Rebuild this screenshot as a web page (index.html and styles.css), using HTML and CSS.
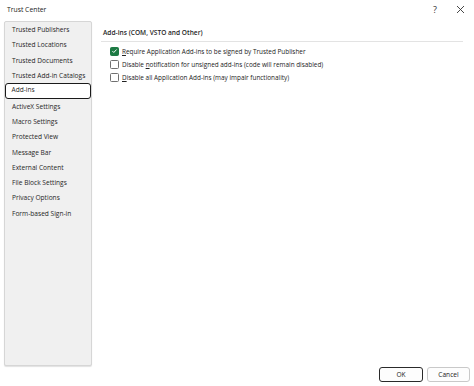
FILE: index.html
```html
<!DOCTYPE html>
<html>
<head>
<meta charset="utf-8">
<link rel="stylesheet" href="styles.css">
</head>
<body>
<div class="dialog">
  <div class="titlebar">
    <span class="title">Trust Center</span>
    <span class="help">?</span>
    <span class="close">
      <svg width="9" height="9" viewBox="0 0 9 9"><path d="M1 1L8 8M8 1L1 8" stroke="#333" stroke-width="0.9"/></svg>
    </span>
  </div>
  <div class="body">
    <nav class="sidebar">
      <div class="item">Trusted Publishers</div>
      <div class="item">Trusted Locations</div>
      <div class="item">Trusted Documents</div>
      <div class="item">Trusted Add-in Catalogs</div>
      <div class="item selected">Add-ins</div>
      <div class="item">ActiveX Settings</div>
      <div class="item">Macro Settings</div>
      <div class="item">Protected View</div>
      <div class="item">Message Bar</div>
      <div class="item">External Content</div>
      <div class="item">File Block Settings</div>
      <div class="item">Privacy Options</div>
      <div class="item">Form-based Sign-in</div>
    </nav>
    <main class="content">
      <div class="heading">Add-ins (COM, VSTO and Other)</div>
      <div class="options">
        <label class="opt"><span class="box checked"><svg width="8" height="8" viewBox="0 0 8 8"><path d="M1.6 4.1L3.2 5.7L6.4 2.3" fill="none" stroke="#fff" stroke-width="1.1"/></svg></span><span><u>R</u>equire Application Add-ins to be signed by Trusted Publisher</span></label>
        <label class="opt"><span class="box"></span><span>Disable <u>n</u>otification for unsigned add-ins (code will remain disabled)</span></label>
        <label class="opt"><span class="box"></span><span><u>D</u>isable all Application Add-ins (may impair functionality)</span></label>
      </div>
    </main>
  </div>
  <div class="footer">
    <button class="btn primary">OK</button>
    <button class="btn">Cancel</button>
  </div>
</div>
</body>
</html>
```
FILE: styles.css
```css
html, body {
  margin: 0;
  padding: 0;
  background: #ffffff;
}
body {
  font-family: "Open Sans", "Noto Sans", sans-serif;
  font-size: 6.6px;
  color: #1b1b1b;
}
.dialog {
  width: 474px;
  height: 386px;
  display: flex;
  flex-direction: column;
}
.titlebar {
  height: 19px;
  display: flex;
  align-items: center;
  padding: 0 9px 0 7px;
  box-sizing: border-box;
}
.title {
  flex: 1;
  font-size: 6.8px;
  color: #222;
}
.help {
  font-size: 9px;
  color: #333;
  margin-right: 19px;
}
.close {
  display: flex;
}
.body {
  height: 347px;
  display: flex;
  padding-top: 2px;
  box-sizing: border-box;
}
.sidebar {
  width: 88px;
  margin-left: 4px;
  background: #f0f0f0;
  border: 1px solid #d6d6d6;
  border-radius: 2px;
  box-shadow: 0 1px 1px rgba(0,0,0,0.12);
  box-sizing: border-box;
  display: flex;
  flex-direction: column;
}
.item {
  height: 15.3px;
  line-height: 15.3px;
  padding-left: 7px;
  color: #1f1f1f;
  white-space: nowrap;
}
.item.selected {
  background: #ffffff;
  border: 1.5px solid #1a1a1a;
  border-radius: 3px;
  padding-left: 5.5px;
  line-height: 12.3px;
  height: 15.5px;
  box-sizing: border-box;
}
.content {
  flex: 1;
  padding-left: 9px;
  padding-right: 11px;
}
.heading {
  font-weight: 600;
  color: #262626;
  padding-top: 7px;
  height: 13px;
  padding-left: 2px;
  border-bottom: 1px solid #e3e3e3;
}
.options {
  padding-left: 9px;
  padding-top: 2.5px;
  display: flex;
  flex-direction: column;
}
.opt {
  display: flex;
  align-items: center;
  height: 13px;
  font-size: 6.4px;
  color: #222;
  white-space: nowrap;
}
.opt u {
  text-decoration-thickness: 0.5px;
  text-underline-offset: 1px;
}
.box {
  width: 7px;
  height: 7px;
  border: 0.8px solid #707070;
  border-radius: 1.5px;
  background: #fff;
  margin-right: 3px;
  display: flex;
  align-items: center;
  justify-content: center;
  flex: none;
}
.box.checked {
  background: #1d7a44;
  border-color: #1d7a44;
}
.footer {
  display: flex;
  justify-content: flex-end;
  gap: 4px;
  padding: 1px 4px 0 0;
}
.btn {
  font-family: inherit;
  font-size: 6.6px;
  width: 43px;
  height: 15px;
  padding: 0;
  background: #fdfdfd;
  border: 1px solid #c9c9c9;
  border-radius: 3px;
  color: #222;
}
.btn.primary {
  width: 44px;
  border: 1.5px solid #2a2a2a;
}
```
